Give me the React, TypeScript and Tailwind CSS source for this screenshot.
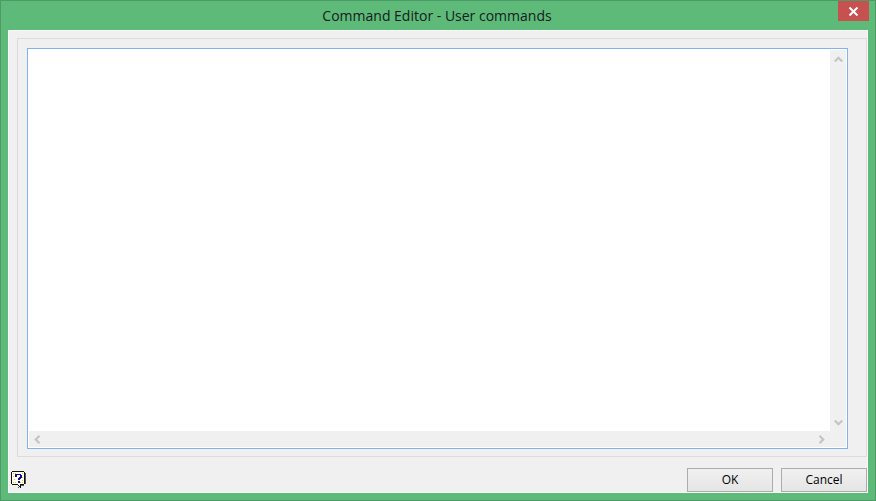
const font = { fontFamily: '"Open Sans","Noto Sans",sans-serif' };

function Chevron({ w, h, d }: { w: number; h: number; d: string }) {
  return (
    <svg width={w} height={h} viewBox={`0 0 ${w} ${h}`} fill="none" stroke="#c4c4c4" strokeWidth="2.2">
      <path d={d} />
    </svg>
  );
}

function HelpIcon() {
  return (
    <svg width="16" height="18" viewBox="0 0 16 18" shapeRendering="crispEdges">
      <path d="M2 .5h10.5l1 1v11l-1 1H9.5v3l-3-3H1.5l-1-1v-11z" fill="#fffdf0" stroke="#111" strokeWidth="1" />
      <path d="M2 2h1v1H2zM4 2h1v1H4zM2 5h1v1H2zM3 8h1v1H3zM2 11h1v1H2zM4 11h1v1H4zM11 2h1v1h-1zM11 6h1v1h-1zM11 9h1v1h-1zM11 11h1v1h-1zM9 11h1v1H9z" fill="#e0c62f" />
      <path d="M4 3h6v1h1v3h-1v1H9v1H7V7h1V6h1V4H6v2H4zM7 10h2v2H7z" fill="#10108c" />
      <path d="M14 2h1v11h-1zM10 14h3v1h-3zM7 16h1v1H7z" fill="#555" />
    </svg>
  );
}

export default function App() {
  return (
    <div className="w-[876px] h-[501px] bg-[#5dba78] border border-[#4c9a66] flex flex-col overflow-hidden" style={font}>
      <div className="h-[29px] shrink-0 relative">
        <div className="w-full text-center text-[14px] leading-[30px] text-[#141c20] pr-[2px]">Command Editor - User commands</div>
        <div className="absolute right-[6px] top-0 w-[31px] h-[20px] bg-[#c75050] flex items-center justify-center">
          <svg width="11" height="9" viewBox="0 0 11 9" fill="none" stroke="#fff" strokeWidth="2">
            <path d="M1.5 .5 9.5 8.5M9.5 .5 1.5 8.5" />
          </svg>
        </div>
      </div>
      <div className="mx-[7px] h-[463px] bg-[#f0f0f0] flex flex-col border border-[#f7faf8]">
        <div className="mt-[7px] ml-[8px] h-[419px] border border-[#dcdcdc] pt-[9px] pl-[9px] pr-[18px]">
          <div className="h-[401px] border border-[#7eb4ea] bg-white p-px flex flex-col">
            <div className="flex-1 flex min-h-0">
              <div className="flex-1 bg-white" />
              <div className="w-[16px] bg-[#f0f0f0] flex flex-col items-center justify-between pt-[6px] pb-[5px]">
                <Chevron w={9} h={6} d="M.8 5.5 4.5 1.8 8.2 5.5" />
                <Chevron w={9} h={6} d="M.8 .5 4.5 4.2 8.2 .5" />
              </div>
            </div>
            <div className="h-[16px] bg-[#f0f0f0] flex items-center justify-between pl-[5px] pr-[21px]">
              <Chevron w={6} h={9} d="M5.5 .8 1.8 4.5 5.5 8.2" />
              <Chevron w={6} h={9} d="M.5 .8 4.2 4.5 .5 8.2" />
            </div>
          </div>
        </div>
        <div className="flex items-start justify-between pt-[11px] pl-[2px]">
          <div className="pt-[3px]"><HelpIcon /></div>
          <div className="flex gap-2">
            <button className="w-[86px] h-[24px] border border-[#acacac] bg-gradient-to-b from-[#f0f0f0] to-[#e5e5e5] text-[12px] text-black">OK</button>
            <button className="w-[86px] h-[24px] border border-[#acacac] bg-gradient-to-b from-[#f0f0f0] to-[#e5e5e5] text-[12px] text-black">Cancel</button>
          </div>
        </div>
      </div>
    </div>
  );
}
